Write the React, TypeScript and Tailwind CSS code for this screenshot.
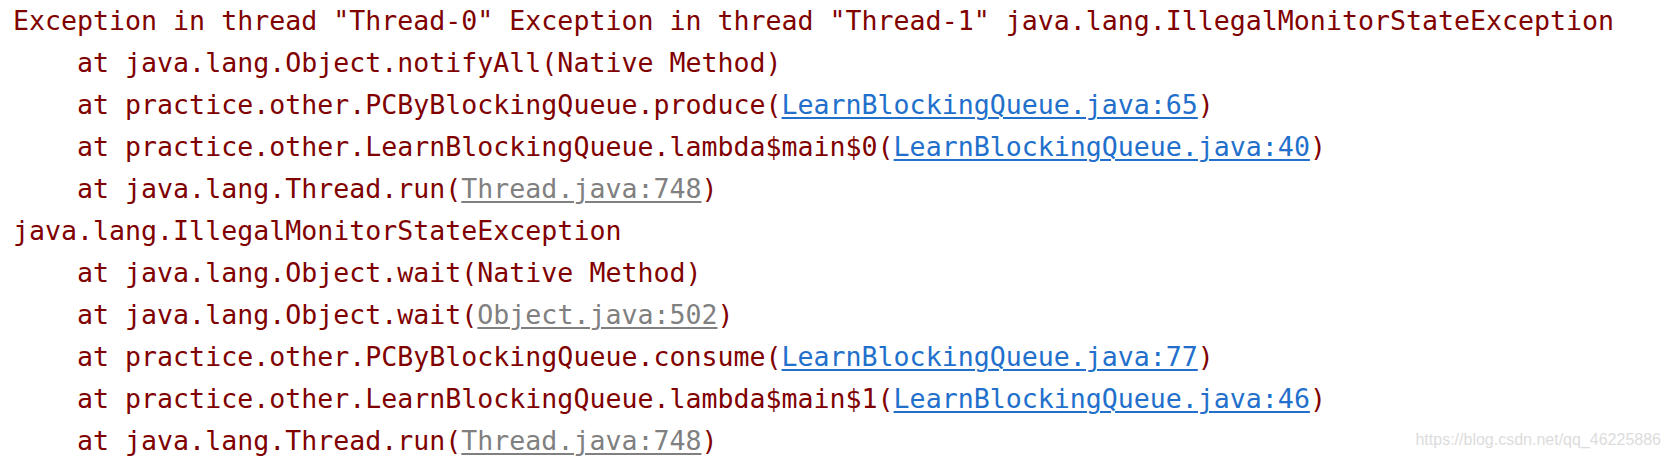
const lines: { indent?: boolean; parts: { text: string; link?: "blue" | "gray" }[] }[] = [
  { parts: [{ text: 'Exception in thread "Thread-0" Exception in thread "Thread-1" java.lang.IllegalMonitorStateException' }] },
  { indent: true, parts: [{ text: "at java.lang.Object.notifyAll(Native Method)" }] },
  { indent: true, parts: [{ text: "at practice.other.PCByBlockingQueue.produce(" }, { text: "LearnBlockingQueue.java:65", link: "blue" }, { text: ")" }] },
  { indent: true, parts: [{ text: "at practice.other.LearnBlockingQueue.lambda$main$0(" }, { text: "LearnBlockingQueue.java:40", link: "blue" }, { text: ")" }] },
  { indent: true, parts: [{ text: "at java.lang.Thread.run(" }, { text: "Thread.java:748", link: "gray" }, { text: ")" }] },
  { parts: [{ text: "java.lang.IllegalMonitorStateException" }] },
  { indent: true, parts: [{ text: "at java.lang.Object.wait(Native Method)" }] },
  { indent: true, parts: [{ text: "at java.lang.Object.wait(" }, { text: "Object.java:502", link: "gray" }, { text: ")" }] },
  { indent: true, parts: [{ text: "at practice.other.PCByBlockingQueue.consume(" }, { text: "LearnBlockingQueue.java:77", link: "blue" }, { text: ")" }] },
  { indent: true, parts: [{ text: "at practice.other.LearnBlockingQueue.lambda$main$1(" }, { text: "LearnBlockingQueue.java:46", link: "blue" }, { text: ")" }] },
  { indent: true, parts: [{ text: "at java.lang.Thread.run(" }, { text: "Thread.java:748", link: "gray" }, { text: ")" }] },
];

export default function App() {
  return (
    <div className="relative w-[1670px] h-[458px] overflow-hidden bg-white">
      <div className="pl-[13px] font-['DejaVu_Sans_Mono',monospace] text-[26.6px] leading-[42px] text-[#800000] whitespace-pre">
        {lines.map((line, i) => (
          <div key={i}>
            {line.indent ? "    " : ""}
            {line.parts.map((p, j) =>
              p.link ? (
                <span
                  key={j}
                  className={`underline decoration-2 underline-offset-[3px] ${
                    p.link === "blue" ? "text-[#2270cc]" : "text-[#808080]"
                  }`}
                >
                  {p.text}
                </span>
              ) : (
                <span key={j}>{p.text}</span>
              )
            )}
          </div>
        ))}
      </div>
      <div className="absolute right-[9px] top-[431px] font-['Liberation_Sans',Arial,sans-serif] text-[16px] leading-[18px] text-[#dcdcdc]">
        https://blog.csdn.net/qq_46225886
      </div>
    </div>
  );
}
